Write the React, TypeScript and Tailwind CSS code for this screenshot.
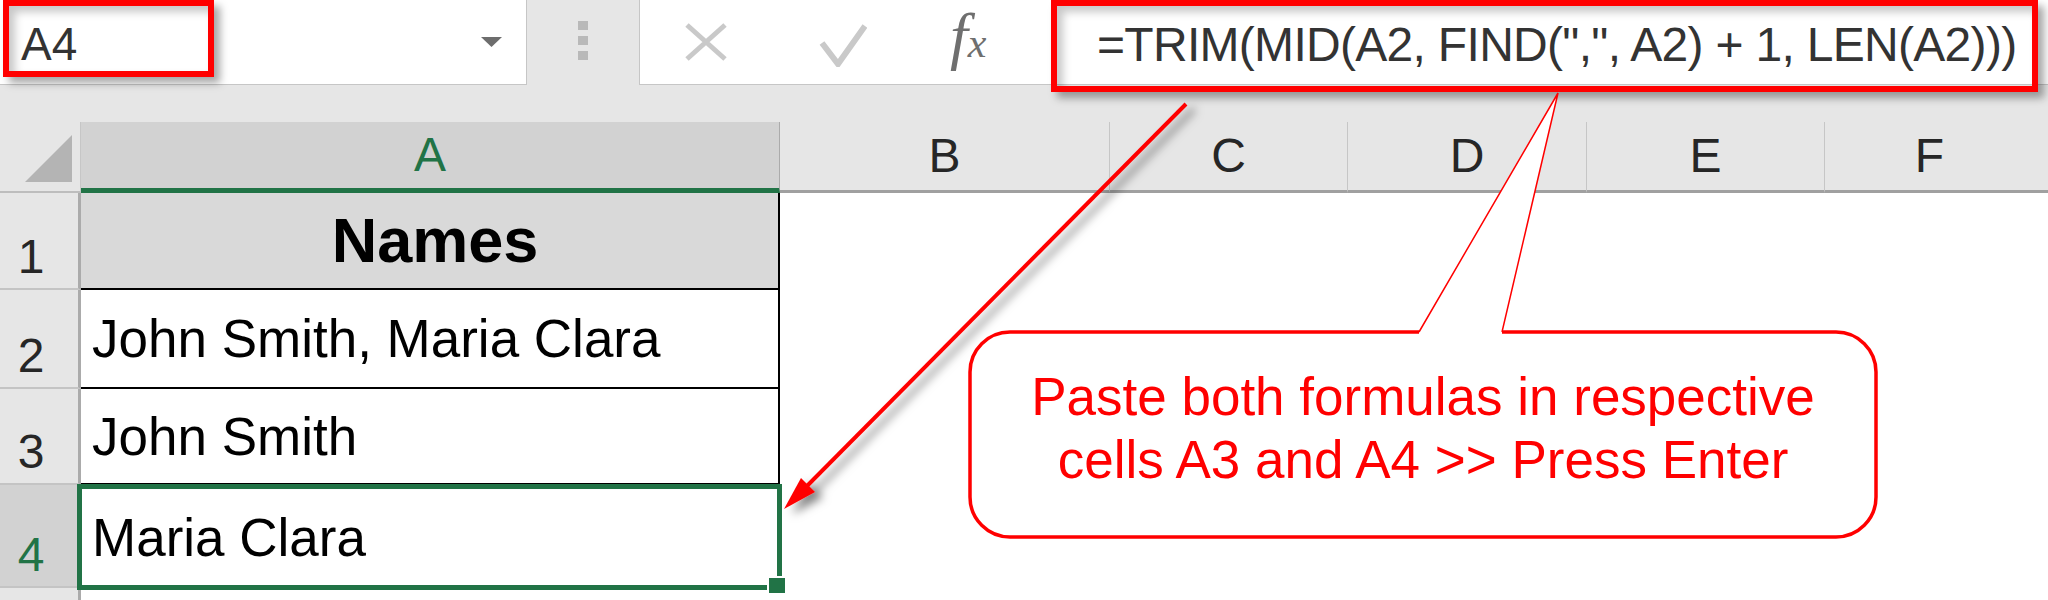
const rowHead =
  "flex w-[81px] shrink-0 items-end border-r-[3px] border-b-2 border-r-[#ababab] border-b-[#c4c4c4]";
const cell =
  "flex w-[699px] shrink-0 items-center border-r-2 border-b-2 border-black pl-[11px] text-[53px] leading-[53px] text-black";

function Num({ n, green }: { n: string; green?: boolean }) {
  return (
    <span
      className={
        "w-[62px] pb-[7px] text-center text-[48px] leading-[48px] " +
        (green ? "text-[#217346]" : "text-[#262626]")
      }
    >
      {n}
    </span>
  );
}

export default function App() {
  return (
    <div className="relative h-[600px] w-[2048px] overflow-hidden bg-white font-['Liberation_Sans',Arial,sans-serif]">
      {/* name box + formula bar */}
      <div className="flex h-[122px] items-start bg-[#e6e6e6]">
        <div className="flex h-[85px] w-[527px] items-start border-r border-b border-[#c6c6c6] bg-white">
          <span className="mt-[21px] pl-[21px] text-[46px] leading-none text-[#333]">A4</span>
          <svg className="mt-[37px] mr-[24px] ml-auto" width="21" height="10" viewBox="0 0 21 10">
            <polygon points="0,0 21,0 10.5,10" fill="#6d6d6d" />
          </svg>
        </div>
        <div className="flex w-[112px] flex-col items-center gap-[6px] pt-[21px]">
          <div className="h-[9px] w-[10px] bg-[#b9b9b9]" />
          <div className="h-[9px] w-[10px] bg-[#b9b9b9]" />
          <div className="h-[9px] w-[10px] bg-[#b9b9b9]" />
        </div>
        <div className="flex h-[85px] flex-1 items-start border-b border-l border-[#c6c6c6] bg-white">
          <svg className="mt-[22px] ml-[44px]" width="44" height="40" viewBox="0 0 44 40">
            <path d="M3 3 L41 37 M41 3 L3 37" stroke="#c9c9c9" strokeWidth="5" fill="none" />
          </svg>
          <svg className="mt-[23px] ml-[91px]" width="48" height="44" viewBox="0 0 48 44">
            <polyline points="3,20 19,41 46,3" stroke="#c9c9c9" strokeWidth="6" fill="none" />
          </svg>
          <span className="mt-[4px] ml-[83px] w-[50px] font-['Liberation_Serif',serif] italic leading-none text-[#6f6f6f]">
            <span className="text-[64px]">f</span>
            <span className="text-[42px]">x</span>
          </span>
          <span className="mt-[21px] ml-[97px] text-[48px] leading-[48px] tracking-[-0.7px] whitespace-nowrap text-[#333]">
            =TRIM(MID(A2, FIND(",", A2) + 1, LEN(A2)))
          </span>
        </div>
      </div>

      {/* column headers */}
      <div className="flex h-[71px] bg-[#e6e6e6] text-[48px] leading-none">
        <div className="w-[81px] shrink-0 border-r border-b-2 border-r-[#c6c6c6] border-b-[#bdbdbd]">
          <svg className="mt-[13px] ml-[25px]" width="47" height="47" viewBox="0 0 47 47">
            <polygon points="47,0 47,47 0,47" fill="#b4b4b4" />
          </svg>
        </div>
        <div className="flex w-[699px] shrink-0 items-center justify-center border-r border-b-[5px] border-r-[#ababab] border-b-[#217346] bg-[#d2d2d2] text-[#217346]">
          A
        </div>
        <div className="flex w-[330px] shrink-0 items-center justify-center border-r border-b-[3px] border-r-[#c6c6c6] border-b-[#a0a0a0] text-[#262626]">
          B
        </div>
        <div className="flex w-[238px] shrink-0 items-center justify-center border-r border-b-[3px] border-r-[#c6c6c6] border-b-[#a0a0a0] text-[#262626]">
          C
        </div>
        <div className="flex w-[239px] shrink-0 items-center justify-center border-r border-b-[3px] border-r-[#c6c6c6] border-b-[#a0a0a0] text-[#262626]">
          D
        </div>
        <div className="flex w-[238px] shrink-0 items-center justify-center border-r border-b-[3px] border-r-[#c6c6c6] border-b-[#a0a0a0] text-[#262626]">
          E
        </div>
        <div className="flex flex-1 items-center justify-center border-b-[3px] border-b-[#a0a0a0] pr-[14px] text-[#262626]">
          F
        </div>
      </div>

      {/* rows */}
      <div className="flex h-[97px]">
        <div className={rowHead + " bg-[#e6e6e6]"}>
          <Num n="1" />
        </div>
        <div className={cell + " justify-center bg-[#d9d9d9] pl-0 text-[63px] font-bold"}>Names</div>
        <div className="flex-1" />
      </div>
      <div className="flex h-[99px]">
        <div className={rowHead + " bg-[#e6e6e6]"}>
          <Num n="2" />
        </div>
        <div className={cell}>John Smith, Maria Clara</div>
        <div className="flex-1" />
      </div>
      <div className="flex h-[96px]">
        <div className={rowHead + " bg-[#e6e6e6]"}>
          <Num n="3" />
        </div>
        <div className={cell}>John Smith</div>
        <div className="flex-1" />
      </div>
      <div className="flex h-[103px]">
        <div className={rowHead + " bg-[#d2d2d2]"}>
          <Num n="4" green />
        </div>
        <div className={cell + " relative pt-[4px]"}>
          Maria Clara
          <div className="absolute -top-[1px] -right-[4px] -bottom-[4px] -left-[4px] border-[5px] border-[#217346]" />
          <div className="absolute top-[91px] left-[686px] h-[19px] w-[20px] border-2 border-white bg-[#217346]" />
        </div>
        <div className="flex-1" />
      </div>
      <div className="flex h-[12px]">
        <div className="w-[81px] shrink-0 border-r-[3px] border-r-[#ababab] bg-[#e6e6e6]" />
        <div className="flex-1" />
      </div>

      {/* annotations */}
      <div className="absolute top-0 left-[3px] h-[77px] w-[211px] border-[6px] border-[#ff0000] shadow-[6px_6px_8px_rgba(0,0,0,0.35),inset_6px_6px_8px_rgba(0,0,0,0.22)]" />
      <div className="absolute top-0 left-[1051px] h-[92px] w-[987px] border-[6px] border-[#ff0000] shadow-[6px_6px_8px_rgba(0,0,0,0.35),inset_6px_6px_8px_rgba(0,0,0,0.22)]" />

      <svg className="pointer-events-none absolute top-0 left-0" width="2048" height="600" viewBox="0 0 2048 600">
        <defs>
          <filter id="shade" x="-20%" y="-20%" width="140%" height="140%">
            <feDropShadow dx="8" dy="5" stdDeviation="5" floodColor="#000" floodOpacity="0.5" />
          </filter>
        </defs>
        <g filter="url(#shade)">
          <line x1="1186" y1="104" x2="806" y2="487" stroke="#ff0000" strokeWidth="4" />
          <polygon points="784,509 815,492 801,478" fill="#ff0000" />
        </g>
        <path
          d="M1010,332 L1419,332 L1558,93 L1502,332 L1836,332 A40,40 0 0 1 1876,372 L1876,497 A40,40 0 0 1 1836,537 L1010,537 A40,40 0 0 1 970,497 L970,372 A40,40 0 0 1 1010,332 Z"
          fill="#fff"
        />
        <path
          d="M1502,332 L1836,332 A40,40 0 0 1 1876,372 L1876,497 A40,40 0 0 1 1836,537 L1010,537 A40,40 0 0 1 970,497 L970,372 A40,40 0 0 1 1010,332 L1419,332"
          fill="none"
          stroke="#ff0000"
          strokeWidth="3.5"
        />
        <path d="M1419,332 L1558,93 L1502,332" fill="none" stroke="#ff0000" strokeWidth="1.5" />
      </svg>

      <div className="absolute top-[332px] left-[970px] flex h-[205px] w-[906px] flex-col items-center justify-center pb-[14px] text-[53px] leading-[63px] text-[#ff0000]">
        <span>Paste both formulas in respective</span>
        <span>cells A3 and A4 &gt;&gt; Press Enter</span>
      </div>
    </div>
  );
}
